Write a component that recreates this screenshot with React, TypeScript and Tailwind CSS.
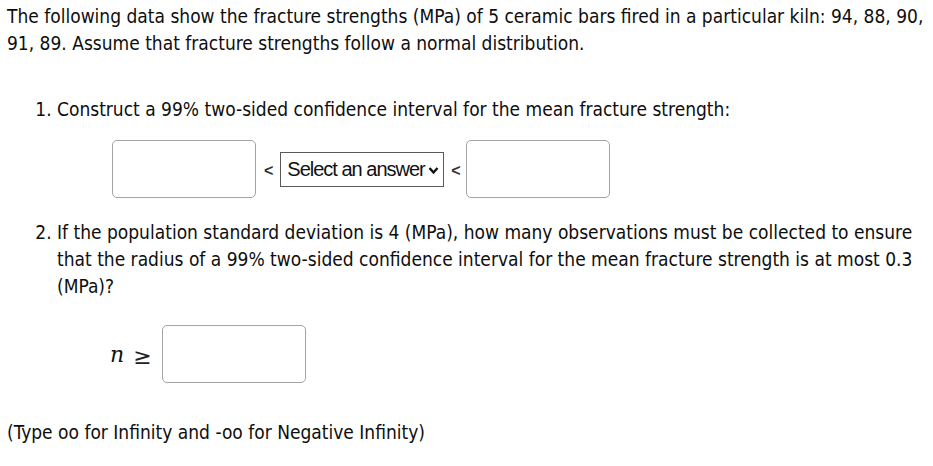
function AnswerBox({ className = "" }: { className?: string }) {
  return (
    <input
      type="text"
      className={`h-[58px] w-[144px] rounded-[5px] border border-[#a3a3a3] bg-white outline-none ${className}`}
    />
  );
}

function Lt() {
  return <span className="font-['Liberation_Sans',sans-serif] text-[16px] font-bold leading-none text-[#333]">&lt;</span>;
}

export default function App() {
  return (
    <div className="min-h-[466px] bg-white pl-[7px] pt-[3px] font-['DejaVu_Sans_Condensed','DejaVu_Sans',sans-serif] text-[19px] leading-[27px] text-[#0e0e0e]">
      <p>
        The following data show the fracture strengths (MPa) of 5 ceramic bars fired in a particular kiln: 94, 88, 90,
        <br />
        91, 89. Assume that fracture strengths follow a normal distribution.
      </p>

      <ol className="mt-[39px] list-decimal pl-[50px]">
        <li>
          Construct a 99% two-sided confidence interval for the mean fracture strength:
          <div className="ml-[55px] mt-[17px] flex items-center">
            <AnswerBox />
            <span className="ml-[8px] mr-[7px]">
              <Lt />
            </span>
            <div className="flex h-[35px] w-[164px] items-center justify-between border border-[#5a5a5a] bg-white pl-[6px] pr-[4px] font-['Liberation_Sans',sans-serif] text-[20px] tracking-[-1px] text-[#111]">
              <span>Select an answer</span>
              <svg width="11" height="9" viewBox="0 0 11 9" className="mt-[3px]">
                <polyline points="1.5,2 5.5,6.5 9.5,2" fill="none" stroke="#111" strokeWidth="2.4" />
              </svg>
            </div>
            <span className="ml-[7px] mr-[5px]">
              <Lt />
            </span>
            <AnswerBox />
          </div>
        </li>
        <li className="mt-[21px]">
          If the population standard deviation is 4 (MPa), how many observations must be collected to ensure
          <br />
          that the radius of a 99% two-sided confidence interval for the mean fracture strength is at most 0.3
          <br />
          (MPa)?
          <div className="ml-[53px] mt-[25px] flex items-center">
            <span className="font-['DejaVu_Serif',serif] text-[22px] italic text-[#111]">n</span>
            <span className="ml-[9px] mr-[10px] mt-[4px] font-['DejaVu_Sans',sans-serif] text-[22px] text-[#222]">≥</span>
            <AnswerBox />
          </div>
        </li>
      </ol>

      <p className="mt-[36px]">(Type oo for Infinity and -oo for Negative Infinity)</p>
    </div>
  );
}
